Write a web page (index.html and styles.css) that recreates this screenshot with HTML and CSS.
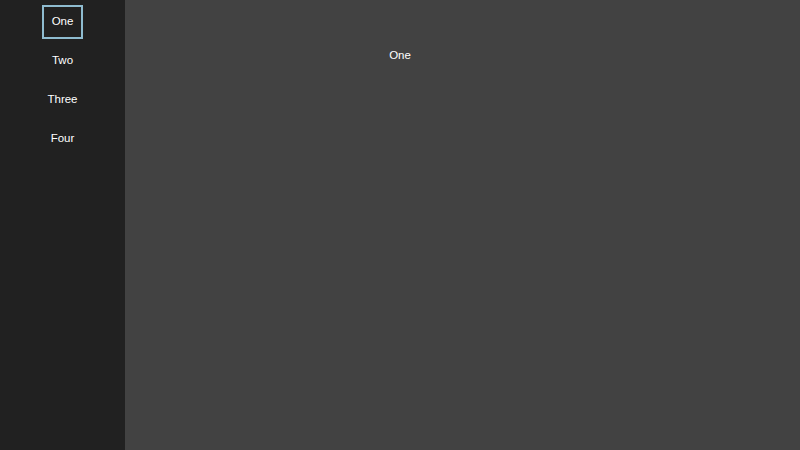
FILE: index.html
```html
<!DOCTYPE html>
<html>
<head>
<meta charset="utf-8">
<link rel="stylesheet" href="styles.css">
</head>
<body>
<div class="app">
  <nav class="sidebar">
    <div class="tab active">One</div>
    <div class="tab">Two</div>
    <div class="tab">Three</div>
    <div class="tab">Four</div>
  </nav>
  <main class="content">
    <div class="panel">One</div>
  </main>
</div>
</body>
</html>
```
FILE: styles.css
```css
html, body {
  margin: 0;
  padding: 0;
  height: 100%;
}
body {
  font-family: "Liberation Sans", Arial, sans-serif;
  font-size: 11.5px;
  color: #ffffff;
  background: #424242;
}
.app {
  display: flex;
  height: 450px;
}
.sidebar {
  width: 125px;
  flex: none;
  background: #212121;
  display: flex;
  flex-direction: column;
  align-items: center;
  padding-top: 5px;
  gap: 5px;
  box-sizing: border-box;
}
.tab {
  height: 34px;
  box-sizing: border-box;
  padding: 0 8px 2px;
  display: flex;
  align-items: center;
  justify-content: center;
  border: 2px solid transparent;
}
.tab.active {
  border-color: #8fbcd0;
}
.content {
  flex: 1;
  background: #424242;
  padding: 48px 125px 0 0;
  text-align: center;
}
.panel {
  line-height: 14px;
}
```
